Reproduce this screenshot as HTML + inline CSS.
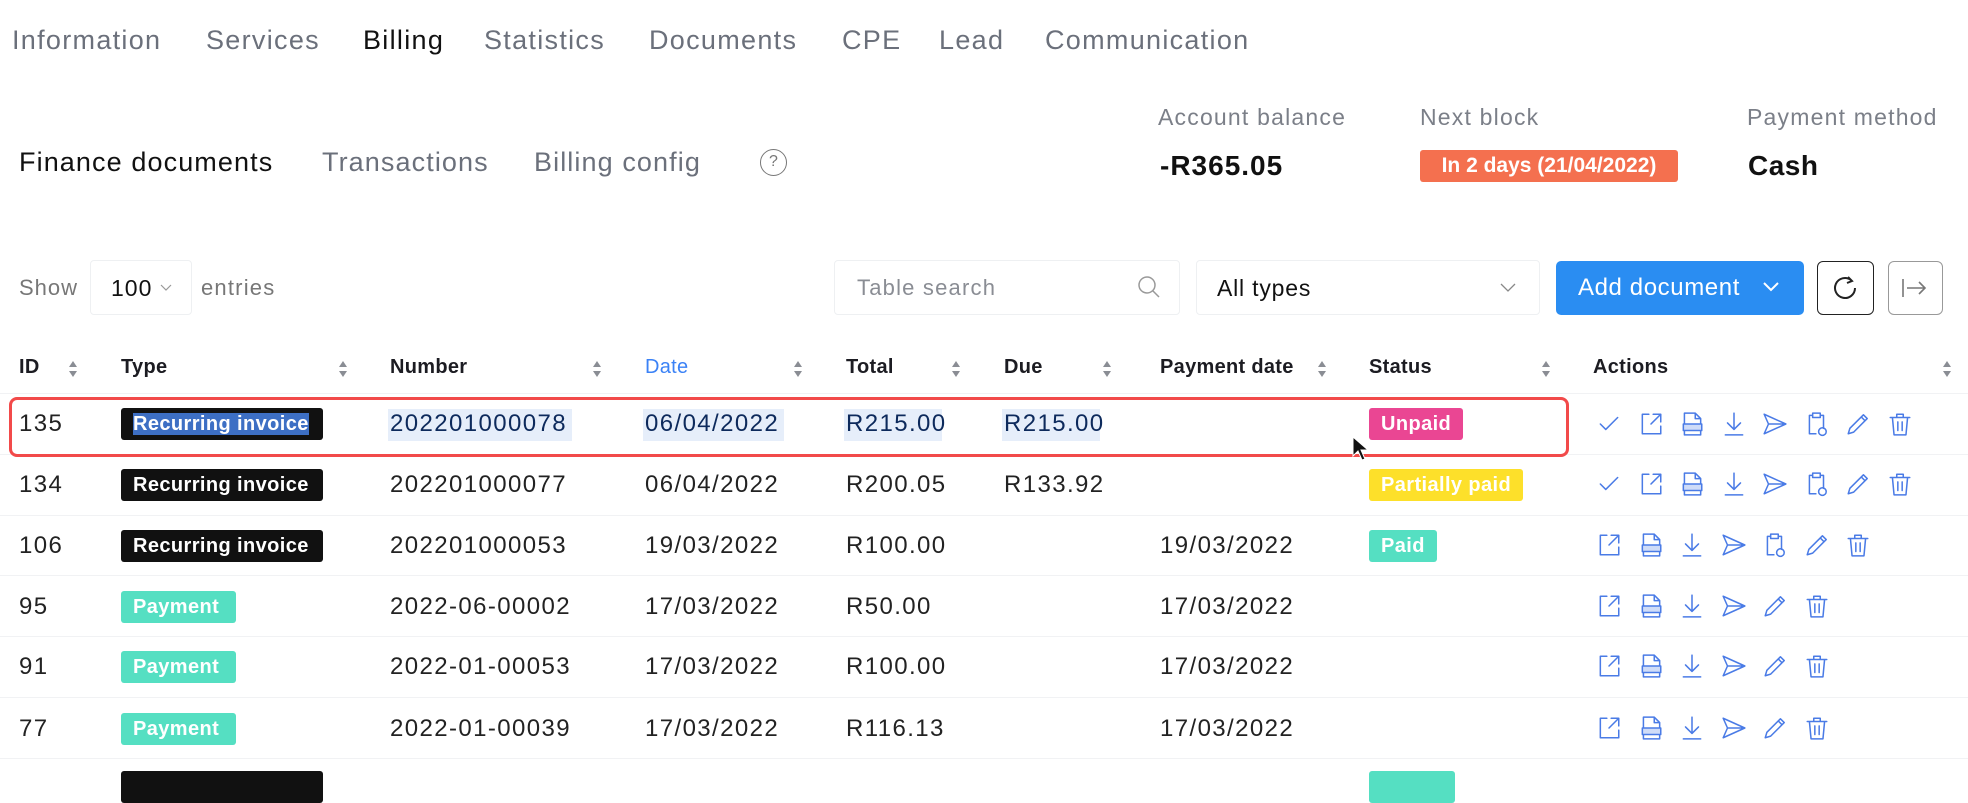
<!DOCTYPE html>
<html><head><meta charset="utf-8"><style>
*{margin:0;padding:0;box-sizing:border-box}
body{width:1968px;height:776px;background:#fff;font-family:"Liberation Sans",sans-serif;position:relative;overflow:hidden;color:#1c1c22}
.a{position:absolute;white-space:nowrap}
.tab{top:25px;font-size:27px;color:#6b707b;letter-spacing:1.3px}
.sub{top:147px;font-size:27px;color:#6b707b;letter-spacing:1.1px}
.lbl{top:104px;font-size:23px;color:#7b7f88;letter-spacing:1.2px}
.hd{top:356px;font-size:20px;font-weight:bold;color:#1c1c22;letter-spacing:.3px}
.srt{position:absolute;width:8px;height:18px}
.srt:before,.srt:after{content:"";position:absolute;left:0;border-left:4px solid transparent;border-right:4px solid transparent}
.srt:before{top:1px;border-bottom:6px solid #8a8d94}
.srt:after{bottom:1px;border-top:6px solid #8a8d94}
.c{font-size:24px;color:#222;letter-spacing:1.4px}
.bdg{position:absolute;height:32px;border-radius:3px;color:#fff;font-weight:bold;font-size:20px;line-height:32px;padding:0 12px;letter-spacing:.4px}
.blk{background:#111;left:121px;width:202px}
.pay{background:#55dfc2;left:121px;width:115px}
.sep{position:absolute;left:0;width:1968px;height:1px;background:#f1f2f4}
svg.i{position:absolute;width:26px;height:26px;fill:none;stroke:#4a7be6;stroke-width:1.4;stroke-linecap:round;stroke-linejoin:round}
</style></head><body>

<div class="a tab" style="left:12px">Information</div>
<div class="a tab" style="left:206px">Services</div>
<div class="a tab" style="left:363px;color:#111">Billing</div>
<div class="a tab" style="left:484px">Statistics</div>
<div class="a tab" style="left:649px">Documents</div>
<div class="a tab" style="left:842px">CPE</div>
<div class="a tab" style="left:939px">Lead</div>
<div class="a tab" style="left:1045px">Communication</div>

<div class="a sub" style="left:19px;color:#111">Finance documents</div>
<div class="a sub" style="left:322px">Transactions</div>
<div class="a sub" style="left:534px">Billing config</div>
<div class="a" style="left:760px;top:149px;width:27px;height:27px;border:1.5px solid #777;border-radius:50%;font-size:16px;color:#777;text-align:center;line-height:24px">?</div>

<div class="a lbl" style="left:1158px">Account balance</div>
<div class="a" style="left:1160px;top:150px;font-size:28px;font-weight:bold;color:#111;letter-spacing:1px">-R365.05</div>
<div class="a lbl" style="left:1420px">Next block</div>
<div class="a" style="left:1420px;top:150px;width:258px;height:32px;background:#f4704f;border-radius:3px;color:#fff;font-size:21px;font-weight:bold;line-height:32px;text-align:center">In 2 days (21/04/2022)</div>
<div class="a lbl" style="left:1747px">Payment method</div>
<div class="a" style="left:1748px;top:150px;font-size:28px;font-weight:bold;color:#111;letter-spacing:.5px">Cash</div>

<div class="a" style="left:19px;top:275px;font-size:22px;color:#777;letter-spacing:1px">Show</div>
<div class="a" style="left:90px;top:260px;width:102px;height:55px;border:1px solid #eef0f2;border-radius:4px"></div>
<div class="a" style="left:111px;top:275px;font-size:23px;color:#111;letter-spacing:1px">100</div>
<svg class="a" style="left:160px;top:282px" width="12" height="10" viewBox="0 0 12 10"><path d="M1 3l5 5 5-5" fill="none" stroke="#999" stroke-width="1.2"/></svg>
<div class="a" style="left:201px;top:275px;font-size:22px;color:#777;letter-spacing:1.2px">entries</div>

<div class="a" style="left:834px;top:260px;width:346px;height:55px;border:1px solid #eef0f2;border-radius:4px"></div>
<div class="a" style="left:857px;top:275px;font-size:22px;color:#8a8d94;letter-spacing:1.2px">Table search</div>
<svg class="a" style="left:1135px;top:273px" width="28" height="28" viewBox="0 0 28 28"><circle cx="12" cy="12" r="8" fill="none" stroke="#999" stroke-width="1.5"/><path d="M18 18l6 6" stroke="#999" stroke-width="1.5"/></svg>
<div class="a" style="left:1196px;top:260px;width:344px;height:55px;border:1px solid #eef0f2;border-radius:4px"></div>
<div class="a" style="left:1217px;top:275px;font-size:23px;color:#111;letter-spacing:.8px">All types</div>
<svg class="a" style="left:1500px;top:282px" width="16" height="12" viewBox="0 0 16 12"><path d="M1 2l7 7 7-7" fill="none" stroke="#888" stroke-width="1.3"/></svg>
<div class="a" style="left:1556px;top:261px;width:248px;height:54px;background:#2a8df2;border-radius:5px;color:#fff;font-size:24px;line-height:54px;padding-left:22px;letter-spacing:.6px">Add document</div>
<svg class="a" style="left:1762px;top:280px" width="18" height="14" viewBox="0 0 18 14"><path d="M2 3l7 7 7-7" fill="none" stroke="#fff" stroke-width="2"/></svg>
<div class="a" style="left:1817px;top:261px;width:57px;height:54px;border:1.5px solid #222;border-radius:6px"></div>
<svg class="a" style="left:1831px;top:274px" width="28" height="28" viewBox="0 0 28 28"><path d="M20 6a10 10 0 1 0 4 8" fill="none" stroke="#222" stroke-width="2"/><path d="M17 3l4 4-5 2" fill="none" stroke="#222" stroke-width="2"/></svg>
<div class="a" style="left:1888px;top:261px;width:55px;height:54px;border:1.5px solid #999;border-radius:6px"></div>
<svg class="a" style="left:1900px;top:274px" width="30" height="28" viewBox="0 0 30 28"><path d="M3 5v18M7 14h18M19 8l6 6-6 6" fill="none" stroke="#777" stroke-width="1.6"/></svg>

<div class="a hd" style="left:19px">ID</div><span class="srt" style="left:69px;top:360px"></span>
<div class="a hd" style="left:121px">Type</div><span class="srt" style="left:339px;top:360px"></span>
<div class="a hd" style="left:390px">Number</div><span class="srt" style="left:593px;top:360px"></span>
<div class="a hd" style="left:645px;color:#3b82f6;font-weight:normal">Date</div><span class="srt" style="left:794px;top:360px"></span>
<div class="a hd" style="left:846px">Total</div><span class="srt" style="left:952px;top:360px"></span>
<div class="a hd" style="left:1004px">Due</div><span class="srt" style="left:1103px;top:360px"></span>
<div class="a hd" style="left:1160px">Payment date</div><span class="srt" style="left:1318px;top:360px"></span>
<div class="a hd" style="left:1369px">Status</div><span class="srt" style="left:1542px;top:360px"></span>
<div class="a hd" style="left:1593px">Actions</div><span class="srt" style="left:1943px;top:360px"></span>

<div class="sep" style="top:393px"></div>
<div class="sep" style="top:454px"></div>
<div class="sep" style="top:515px"></div>
<div class="sep" style="top:575px"></div>
<div class="sep" style="top:636px"></div>
<div class="sep" style="top:697px"></div>
<div class="sep" style="top:758px"></div>

<!-- row 1 -->
<div class="a" style="left:388px;top:409px;width:184px;height:32px;background:#e6eefa"></div>
<div class="a" style="left:643px;top:409px;width:141px;height:32px;background:#e6eefa"></div>
<div class="a" style="left:844px;top:409px;width:98px;height:32px;background:#e6eefa"></div>
<div class="a" style="left:1002px;top:409px;width:98px;height:32px;background:#e6eefa"></div>
<div class="a c" style="left:19px;top:410px">135</div>
<div class="bdg blk" style="top:408px"><span style="background:#3d6fc4">Recurring invoice</span></div>
<div class="a c" style="left:390px;top:410px;color:#0d2a5c">202201000078</div>
<div class="a c" style="left:645px;top:410px;color:#0d2a5c">06/04/2022</div>
<div class="a c" style="left:846px;top:410px;color:#0d2a5c">R215.00</div>
<div class="a c" style="left:1004px;top:410px;color:#0d2a5c">R215.00</div>
<div class="bdg" style="left:1369px;top:408px;background:#ea4693">Unpaid</div>
<div class="a" style="left:9px;top:397px;width:1560px;height:60px;border:3px solid #f24a4a;border-radius:8px"></div>
<svg class="a" style="left:1352px;top:436px" width="18" height="26" viewBox="0 0 18 26"><path d="M1 1v19l5-5 4 9 3-1-4-9h7z" fill="#111" stroke="#fff" stroke-width="1"/></svg>

<!-- row 2 -->
<div class="a c" style="left:19px;top:471px">134</div>
<div class="bdg blk" style="top:469px">Recurring invoice</div>
<div class="a c" style="left:390px;top:471px">202201000077</div>
<div class="a c" style="left:645px;top:471px">06/04/2022</div>
<div class="a c" style="left:846px;top:471px">R200.05</div>
<div class="a c" style="left:1004px;top:471px">R133.92</div>
<div class="bdg" style="left:1369px;top:469px;background:#fde02a">Partially paid</div>

<!-- row 3 -->
<div class="a c" style="left:19px;top:532px">106</div>
<div class="bdg blk" style="top:530px">Recurring invoice</div>
<div class="a c" style="left:390px;top:532px">202201000053</div>
<div class="a c" style="left:645px;top:532px">19/03/2022</div>
<div class="a c" style="left:846px;top:532px">R100.00</div>
<div class="a c" style="left:1160px;top:532px">19/03/2022</div>
<div class="bdg" style="left:1369px;top:530px;background:#55dfc2">Paid</div>

<!-- row 4 -->
<div class="a c" style="left:19px;top:593px">95</div>
<div class="bdg pay" style="top:591px">Payment</div>
<div class="a c" style="left:390px;top:593px">2022-06-00002</div>
<div class="a c" style="left:645px;top:593px">17/03/2022</div>
<div class="a c" style="left:846px;top:593px">R50.00</div>
<div class="a c" style="left:1160px;top:593px">17/03/2022</div>

<!-- row 5 -->
<div class="a c" style="left:19px;top:653px">91</div>
<div class="bdg pay" style="top:651px">Payment</div>
<div class="a c" style="left:390px;top:653px">2022-01-00053</div>
<div class="a c" style="left:645px;top:653px">17/03/2022</div>
<div class="a c" style="left:846px;top:653px">R100.00</div>
<div class="a c" style="left:1160px;top:653px">17/03/2022</div>

<!-- row 6 -->
<div class="a c" style="left:19px;top:715px">77</div>
<div class="bdg pay" style="top:713px">Payment</div>
<div class="a c" style="left:390px;top:715px">2022-01-00039</div>
<div class="a c" style="left:645px;top:715px">17/03/2022</div>
<div class="a c" style="left:846px;top:715px">R116.13</div>
<div class="a c" style="left:1160px;top:715px">17/03/2022</div>

<!-- row 7 partial -->
<div class="bdg blk" style="top:771px"></div>
<div class="bdg" style="left:1369px;top:771px;width:86px;background:#55dfc2"></div>

<!-- icons rows 1-2 -->
<svg class="i" style="left:1596px;top:411px" viewBox="0 0 24 24"><path d="M4 12l5 5L20 6"/></svg>
<svg class="i" style="left:1638px;top:411px" viewBox="0 0 24 24"><path d="M10 3H4v18h17v-7M14 3h7v7M21 3l-9 9"/></svg>
<svg class="i" style="left:1679px;top:411px" viewBox="0 0 24 24"><path d="M5 2h10l5 5v15H5zM15 2v5h5"/><rect x="4" y="12" width="17" height="6" fill="#cfdcf8"/></svg>
<svg class="i" style="left:1721px;top:411px" viewBox="0 0 24 24"><path d="M12 2v15M6 11l6 6 6-6M4 22h16"/></svg>
<svg class="i" style="left:1762px;top:411px" viewBox="0 0 24 24"><path d="M2 3l20 9-20 9 4-9zM6 12h16"/></svg>
<svg class="i" style="left:1804px;top:411px" viewBox="0 0 24 24"><path d="M15 4h3v12M11 21H5V4h3M8 2h7v4H8z"/><circle cx="17" cy="19" r="3.5"/></svg>
<svg class="i" style="left:1845px;top:411px" viewBox="0 0 24 24"><path d="M3 21l1.5-5L17 3.5l3.5 3.5L8 19.5zM15 5.5l3.5 3.5"/></svg>
<svg class="i" style="left:1887px;top:411px" viewBox="0 0 24 24"><path d="M3 6h18M9 6V3h6v3M5 6l1.5 16h11L19 6M10 10v8M14 10v8"/></svg>

<svg class="i" style="left:1596px;top:471px" viewBox="0 0 24 24"><path d="M4 12l5 5L20 6"/></svg>
<svg class="i" style="left:1638px;top:471px" viewBox="0 0 24 24"><path d="M10 3H4v18h17v-7M14 3h7v7M21 3l-9 9"/></svg>
<svg class="i" style="left:1679px;top:471px" viewBox="0 0 24 24"><path d="M5 2h10l5 5v15H5zM15 2v5h5"/><rect x="4" y="12" width="17" height="6" fill="#cfdcf8"/></svg>
<svg class="i" style="left:1721px;top:471px" viewBox="0 0 24 24"><path d="M12 2v15M6 11l6 6 6-6M4 22h16"/></svg>
<svg class="i" style="left:1762px;top:471px" viewBox="0 0 24 24"><path d="M2 3l20 9-20 9 4-9zM6 12h16"/></svg>
<svg class="i" style="left:1804px;top:471px" viewBox="0 0 24 24"><path d="M15 4h3v12M11 21H5V4h3M8 2h7v4H8z"/><circle cx="17" cy="19" r="3.5"/></svg>
<svg class="i" style="left:1845px;top:471px" viewBox="0 0 24 24"><path d="M3 21l1.5-5L17 3.5l3.5 3.5L8 19.5zM15 5.5l3.5 3.5"/></svg>
<svg class="i" style="left:1887px;top:471px" viewBox="0 0 24 24"><path d="M3 6h18M9 6V3h6v3M5 6l1.5 16h11L19 6M10 10v8M14 10v8"/></svg>

<!-- row 3 icons -->
<svg class="i" style="left:1596px;top:532px" viewBox="0 0 24 24"><path d="M10 3H4v18h17v-7M14 3h7v7M21 3l-9 9"/></svg>
<svg class="i" style="left:1638px;top:532px" viewBox="0 0 24 24"><path d="M5 2h10l5 5v15H5zM15 2v5h5"/><rect x="4" y="12" width="17" height="6" fill="#cfdcf8"/></svg>
<svg class="i" style="left:1679px;top:532px" viewBox="0 0 24 24"><path d="M12 2v15M6 11l6 6 6-6M4 22h16"/></svg>
<svg class="i" style="left:1721px;top:532px" viewBox="0 0 24 24"><path d="M2 3l20 9-20 9 4-9zM6 12h16"/></svg>
<svg class="i" style="left:1762px;top:532px" viewBox="0 0 24 24"><path d="M15 4h3v12M11 21H5V4h3M8 2h7v4H8z"/><circle cx="17" cy="19" r="3.5"/></svg>
<svg class="i" style="left:1804px;top:532px" viewBox="0 0 24 24"><path d="M3 21l1.5-5L17 3.5l3.5 3.5L8 19.5zM15 5.5l3.5 3.5"/></svg>
<svg class="i" style="left:1845px;top:532px" viewBox="0 0 24 24"><path d="M3 6h18M9 6V3h6v3M5 6l1.5 16h11L19 6M10 10v8M14 10v8"/></svg>

<!-- rows 4-6 icons -->
<svg class="i" style="left:1596px;top:593px" viewBox="0 0 24 24"><path d="M10 3H4v18h17v-7M14 3h7v7M21 3l-9 9"/></svg>
<svg class="i" style="left:1638px;top:593px" viewBox="0 0 24 24"><path d="M5 2h10l5 5v15H5zM15 2v5h5"/><rect x="4" y="12" width="17" height="6" fill="#cfdcf8"/></svg>
<svg class="i" style="left:1679px;top:593px" viewBox="0 0 24 24"><path d="M12 2v15M6 11l6 6 6-6M4 22h16"/></svg>
<svg class="i" style="left:1721px;top:593px" viewBox="0 0 24 24"><path d="M2 3l20 9-20 9 4-9zM6 12h16"/></svg>
<svg class="i" style="left:1762px;top:593px" viewBox="0 0 24 24"><path d="M3 21l1.5-5L17 3.5l3.5 3.5L8 19.5zM15 5.5l3.5 3.5"/></svg>
<svg class="i" style="left:1804px;top:593px" viewBox="0 0 24 24"><path d="M3 6h18M9 6V3h6v3M5 6l1.5 16h11L19 6M10 10v8M14 10v8"/></svg>

<svg class="i" style="left:1596px;top:653px" viewBox="0 0 24 24"><path d="M10 3H4v18h17v-7M14 3h7v7M21 3l-9 9"/></svg>
<svg class="i" style="left:1638px;top:653px" viewBox="0 0 24 24"><path d="M5 2h10l5 5v15H5zM15 2v5h5"/><rect x="4" y="12" width="17" height="6" fill="#cfdcf8"/></svg>
<svg class="i" style="left:1679px;top:653px" viewBox="0 0 24 24"><path d="M12 2v15M6 11l6 6 6-6M4 22h16"/></svg>
<svg class="i" style="left:1721px;top:653px" viewBox="0 0 24 24"><path d="M2 3l20 9-20 9 4-9zM6 12h16"/></svg>
<svg class="i" style="left:1762px;top:653px" viewBox="0 0 24 24"><path d="M3 21l1.5-5L17 3.5l3.5 3.5L8 19.5zM15 5.5l3.5 3.5"/></svg>
<svg class="i" style="left:1804px;top:653px" viewBox="0 0 24 24"><path d="M3 6h18M9 6V3h6v3M5 6l1.5 16h11L19 6M10 10v8M14 10v8"/></svg>

<svg class="i" style="left:1596px;top:715px" viewBox="0 0 24 24"><path d="M10 3H4v18h17v-7M14 3h7v7M21 3l-9 9"/></svg>
<svg class="i" style="left:1638px;top:715px" viewBox="0 0 24 24"><path d="M5 2h10l5 5v15H5zM15 2v5h5"/><rect x="4" y="12" width="17" height="6" fill="#cfdcf8"/></svg>
<svg class="i" style="left:1679px;top:715px" viewBox="0 0 24 24"><path d="M12 2v15M6 11l6 6 6-6M4 22h16"/></svg>
<svg class="i" style="left:1721px;top:715px" viewBox="0 0 24 24"><path d="M2 3l20 9-20 9 4-9zM6 12h16"/></svg>
<svg class="i" style="left:1762px;top:715px" viewBox="0 0 24 24"><path d="M3 21l1.5-5L17 3.5l3.5 3.5L8 19.5zM15 5.5l3.5 3.5"/></svg>
<svg class="i" style="left:1804px;top:715px" viewBox="0 0 24 24"><path d="M3 6h18M9 6V3h6v3M5 6l1.5 16h11L19 6M10 10v8M14 10v8"/></svg>

</body></html>
